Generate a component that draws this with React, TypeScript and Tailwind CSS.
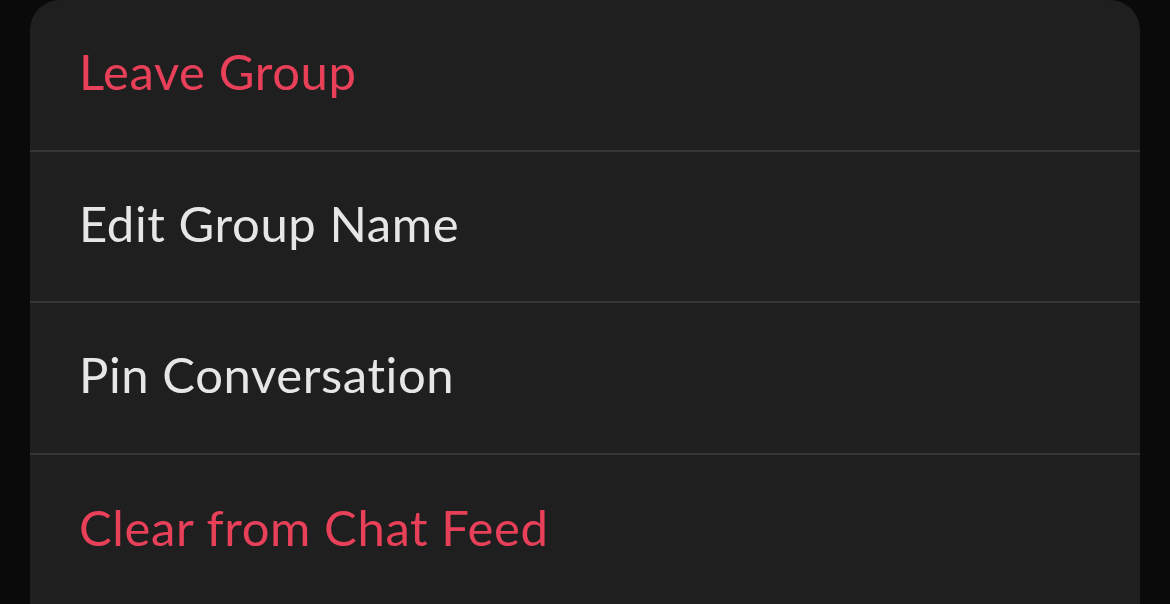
import React from "react";

const items = [
  { label: "Leave Group", red: true },
  { label: "Edit Group Name", red: false },
  { label: "Pin Conversation", red: false },
  { label: "Clear from Chat Feed", red: true },
];

export default function App() {
  return (
    <div className="w-[1170px] h-[604px] bg-[#0a0a0a] px-[30px] overflow-hidden" style={{ fontFamily: "Lato, 'Noto Sans', sans-serif" }}>
      <div className="h-full bg-[#1f1f1f] rounded-t-[30px]">
        {items.map((it, i) => (
          <div
            key={i}
            className={`h-[151.5px] flex items-center pl-[49px] pb-[6px] ${i < items.length - 1 ? "border-b-2 border-[#353535]" : ""}`}
          >
            <span className={`text-[49px] leading-none tracking-[0.6px] ${it.red ? "text-[#e9405a]" : "text-[#e6e6e6]"}`}>
              {it.label}
            </span>
          </div>
        ))}
      </div>
    </div>
  );
}
